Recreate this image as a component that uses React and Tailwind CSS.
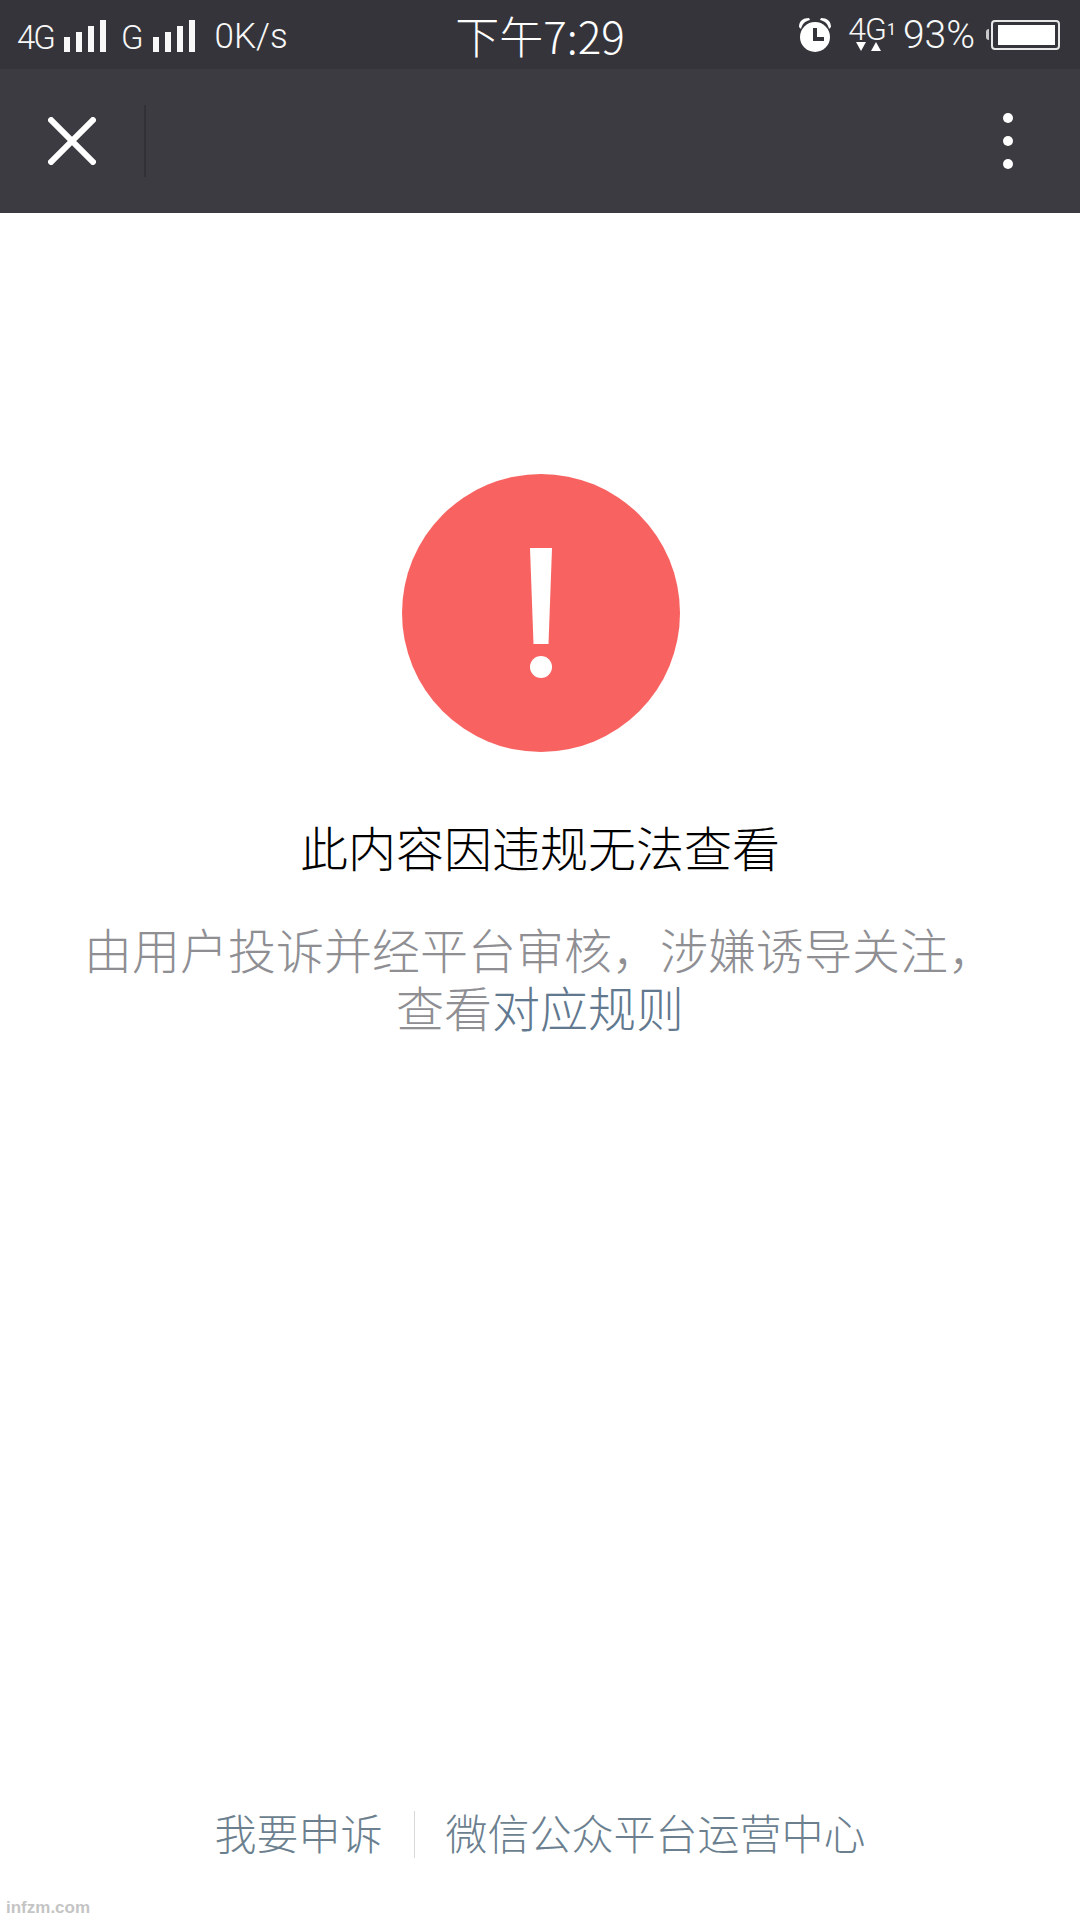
import React from 'react';

const cjk = "font-['Noto_Sans_CJK_SC','Noto_Sans',sans-serif]";

const Signal = () => (
  <svg width="42" height="32" viewBox="0 0 42 32" fill="#f8f8f8">
    <rect x="0" y="17" width="6" height="15" />
    <rect x="12" y="12" width="6" height="20" />
    <rect x="24" y="6" width="6" height="26" />
    <rect x="36" y="0" width="6" height="32" />
  </svg>
);

const Alarm = () => (
  <svg width="34" height="36" viewBox="0 0 34 36" fill="#fff">
    <path d="M1 10 C1 4 5 1 11 1 L12 3 C7 4 4 7 3 12 Z" />
    <path d="M33 10 C33 4 29 1 23 1 L22 3 C27 4 30 7 31 12 Z" />
    <circle cx="17" cy="20" r="15" />
    <path d="M15 11 H19 V20 H26 V24 H15 Z" fill="#35343a" />
  </svg>
);

const Battery = () => (
  <div className="flex items-center">
    <div className="h-[11px] w-[3px] rounded-l-sm bg-[#c9c9cb] mr-[1px]" />
    <div className="w-[69px] h-[30px] ml-[1px] border-2 border-[#e8e8e8] rounded-[4px] p-[3px] pl-[5px]">
      <div className="w-full h-full bg-white" />
    </div>
  </div>
);

const StatusBar = () => (
  <div className="h-[69px] bg-[#35343a] grid grid-cols-[1fr_auto_1fr] items-center text-[#f8f8f8] font-['Roboto',sans-serif]">
    <div className="flex items-center pl-[17px] pt-[6px] text-[33px] font-light whitespace-nowrap">
      <span className="tracking-[-2px]">4G</span>
      <span className="ml-[10px] -mt-[3px]"><Signal /></span>
      <span className="ml-[15px]">G</span>
      <span className="ml-[10px] -mt-[3px]"><Signal /></span>
      <span className="ml-[19px] text-[35px]">0K/s</span>
    </div>
    <div className={`${cjk} text-[44px] font-light leading-none text-white whitespace-nowrap`}>下午7:29</div>
    <div className="flex items-center justify-end pr-[20px] whitespace-nowrap">
      <Alarm />
      <div className="ml-[16px] mr-[1px] flex flex-col items-center -mt-[4px]">
        <div className="flex items-start leading-none">
          <span className="text-[32px] font-light tracking-[-1px] leading-[30px]">4G</span>
          <span className="text-[16px] leading-[32px] ml-[1px]">1</span>
        </div>
        <div className="flex gap-[5px] -ml-[8px] -mt-[4px]">
          <svg width="10" height="9" viewBox="0 0 10 9" fill="#fff"><path d="M0 0 H10 L5 9 Z" /></svg>
          <svg width="10" height="9" viewBox="0 0 10 9" fill="#fff"><path d="M0 9 H10 L5 0 Z" /></svg>
        </div>
      </div>
      <span className="ml-[6px] mr-[11px] mt-[2px] text-[39px] font-light">93%</span>
      <Battery />
    </div>
  </div>
);

const NavBar = () => (
  <div className="h-[144px] bg-[#3c3b41] flex items-center justify-between">
    <div className="flex items-center">
      <svg className="ml-[48px]" width="48" height="48" viewBox="0 0 48 48" stroke="#fff" strokeWidth="6" fill="none">
        <path d="M1 1 L47 47 M47 1 L1 47" />
      </svg>
      <div className="ml-[48px] w-[2px] h-[72px] bg-[#323137]" />
    </div>
    <div className="mr-[67px] flex flex-col gap-[13px]">
      <div className="w-[10px] h-[10px] rounded-full bg-white" />
      <div className="w-[10px] h-[10px] rounded-full bg-white" />
      <div className="w-[10px] h-[10px] rounded-full bg-white" />
    </div>
  </div>
);

const WarnIcon = () => (
  <svg className="ml-[2px]" width="278" height="278" viewBox="0 0 278 278">
    <circle cx="139" cy="139" r="139" fill="#f86361" />
    <path d="M128 74 H150 L146.5 170 H131.5 Z" fill="#fff" />
    <circle cx="139" cy="193" r="11" fill="#fff" />
  </svg>
);

export default function App() {
  return (
    <div className={`w-[1080px] h-[1920px] bg-white flex flex-col overflow-hidden relative ${cjk}`}>
      <StatusBar />
      <NavBar />

      <div className="flex flex-col items-center pt-[261px] flex-1">
        <WarnIcon />
        <h1 className="mt-[65px] text-[48px] leading-[58px] font-light text-black">此内容因违规无法查看</h1>
        <div className="mt-[44px] w-full text-[48px] leading-[58px] font-light text-[#8e8e93] whitespace-nowrap">
          <p className="text-center">由用户投诉并经平台审核，涉嫌诱导关注，</p>
          <p className="flex justify-center">
            <span>查看</span>
            <span className="text-[#61788f]">对应规则</span>
          </p>
        </div>
      </div>

      <div className="flex items-center justify-center text-[42px] leading-[47px] font-light text-[#6b7f8f] mb-[62px]">
        <span>我要申诉</span>
        <div className="ml-[31px] mr-[31px] mt-[7px] w-[1px] h-[47px] bg-[#d8d8d8]" />
        <span>微信公众平台运营中心</span>
      </div>

      <div className="absolute left-[6px] bottom-[0px] text-[17px] font-bold text-[#c4c4c4] font-['Liberation_Sans',sans-serif]">infzm.com</div>
    </div>
  );
}
